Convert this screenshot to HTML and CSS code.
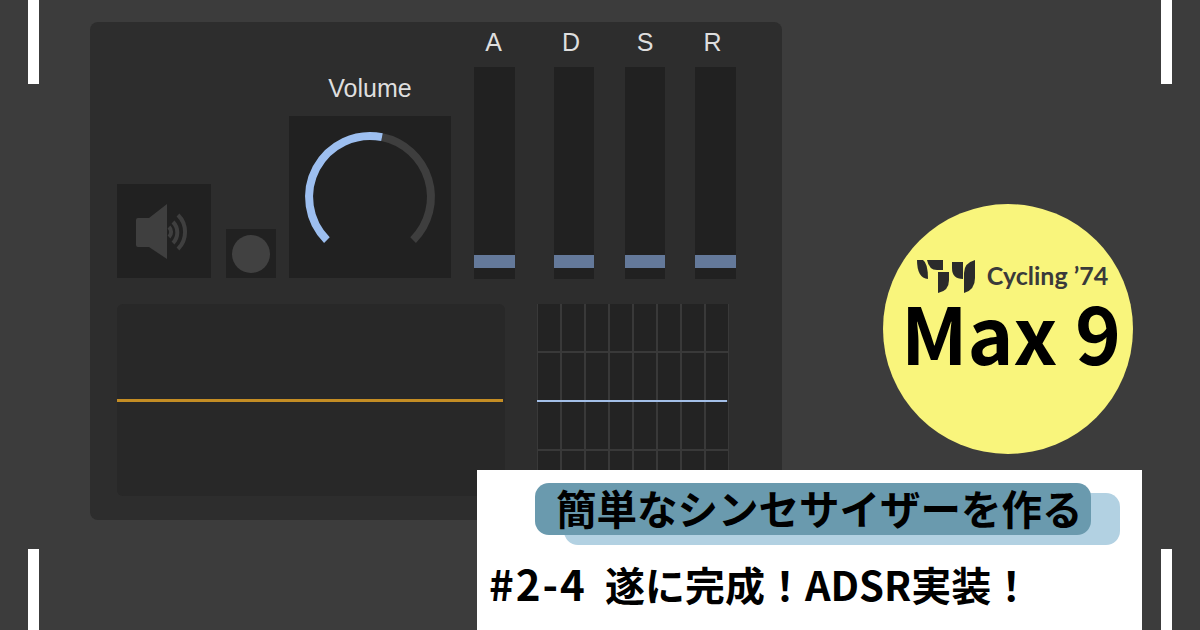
FILE: index.html
```html
<!DOCTYPE html>
<html lang="ja">

<head>
    <meta charset="UTF-8">
    <meta name="viewport" content="width=device-width, initial-scale=1.0">
    <title>Max 9 #2-4</title>
    <link rel="stylesheet" href="styles.css">
</head>

<body>
    <div class="thumb">
        <!-- Corner marks -->
        <span class="mark mark-tl"></span>
        <span class="mark mark-tr"></span>
        <span class="mark mark-bl"></span>
        <span class="mark mark-br"></span>

        <!-- Patch -->
        <div class="panel">
            <div class="top-row">
                <div class="box speaker">
                    <svg width="94" height="94" viewBox="0 0 94 94">
                        <path class="icon-fill" d="M19 36 Q19 34 21 34 H32 L50 20 V75 L32 63 H21 Q19 63 19 61 Z" />
                        <g class="icon-waves">
                            <path d="M52 43 A7 7 0 0 1 52 53" />
                            <path d="M56 38 A15 15 0 0 1 56 59" />
                            <path d="M61 31 A24 24 0 0 1 61 65" />
                        </g>
                    </svg>
                </div>
                <div class="box toggle"><span class="toggle-dot"></span></div>
                <div class="knob-col">
                    <div class="label">Volume</div>
                    <div class="box knob">
                        <svg width="162" height="162" viewBox="0 0 162 162">
                            <path class="arc arc-bg" d="M93 21.2 A61 61 0 0 1 124.1 124.1" />
                            <path class="arc arc-on" d="M37.9 124.1 A61 61 0 0 1 93 21.2" />
                        </svg>
                    </div>
                </div>
                <div class="sliders">
                    <div class="slider-col"><div class="label">A</div><div class="slider"><span class="slider-thumb"></span></div></div>
                    <div class="slider-col slider-d"><div class="label">D</div><div class="slider"><span class="slider-thumb"></span></div></div>
                    <div class="slider-col slider-s"><div class="label">S</div><div class="slider"><span class="slider-thumb"></span></div></div>
                    <div class="slider-col slider-r"><div class="label">R</div><div class="slider"><span class="slider-thumb"></span></div></div>
                </div>
            </div>
            <div class="bottom-row">
                <div class="scope"><span class="scope-line"></span></div>
                <div class="grid-scope"><span class="grid-line"></span></div>
            </div>
        </div>

        <!-- Yellow badge -->
        <div class="badge">
            <div class="brand">
                <svg width="58" height="33" viewBox="0 0 58 33">
                    <path class="logo" d="M0 0 H6 Q11 3 11 19 Q0 18 0 0 Z" />
                    <path class="logo" d="M10 0 H26 V10 H20 Q12 10 10 0 Z" />
                    <path class="logo" d="M21 12 H32 V20 Q32 31 21 33 Z" />
                    <path class="logo" d="M35 2 H46 V19 Q35 19 35 8 Z" />
                    <path class="logo" d="M58 0 Q47 3 47 13 V33 Q58 30 58 18 Z" />
                </svg>
                <span class="brand-name">Cycling ’74</span>
            </div>
            <div class="badge-title">Max 9</div>
        </div>

        <!-- Title card -->
        <div class="card">
            <h1 class="series">簡単なシンセサイザーを作る</h1>
            <p class="episode"><span class="episode-no">#2-4</span>遂に完成！ADSR実装！</p>
        </div>
    </div>
</body>

</html>
```

FILE: styles.css
```css
/* Global reset */
* {
    box-sizing: border-box;
    margin: 0;
    padding: 0;
}

body {
    width: 1200px;
    height: 630px;
    overflow: hidden;
    background-color: #3c3c3c;
    font-family: "Liberation Sans", Arial, sans-serif;
}

.thumb {
    position: relative;
    width: 1200px;
    height: 630px;
    padding: 22px 0 0 90px;
    overflow: hidden;
}

/* Corner marks */
.mark {
    position: absolute;
    width: 11px;
    background-color: #fff;
}

.mark-tl,
.mark-tr {
    top: 0;
    height: 84px;
}

.mark-bl,
.mark-br {
    bottom: 0;
    height: 81px;
}

.mark-tl,
.mark-bl {
    left: 28px;
}

.mark-tr,
.mark-br {
    left: 1161px;
}

/* Patch panel */
.panel {
    width: 692px;
    height: 498px;
    padding-left: 27px;
    background-color: #2d2d2d;
    border-radius: 8px;
}

.top-row {
    display: flex;
    align-items: flex-end;
    height: 256px;
}

.box {
    background-color: #212121;
}

.label {
    color: #dedede;
    font-size: 25px;
    line-height: 28px;
    text-align: center;
}

.speaker {
    width: 94px;
    height: 94px;
    margin-right: 15px;
}

.speaker svg,
.knob svg {
    display: block;
}

.icon-fill {
    fill: #3f3f3f;
}

.icon-waves path {
    fill: none;
    stroke: #3f3f3f;
    stroke-width: 4;
}

.toggle {
    display: flex;
    align-items: center;
    justify-content: center;
    width: 50px;
    height: 49px;
    margin-right: 13px;
}

.toggle-dot {
    width: 38px;
    height: 38px;
    border-radius: 50%;
    background-color: #414141;
}

.knob-col {
    width: 162px;
    margin-right: 23px;
}

.knob-col .label {
    margin-bottom: 14px;
}

.knob {
    width: 162px;
    height: 162px;
}

.arc {
    fill: none;
    stroke-width: 8;
}

.arc-bg {
    stroke: #3e3e3e;
}

.arc-on {
    stroke: #9dbff0;
}

/* ADSR sliders */
.sliders {
    display: flex;
    margin-bottom: -1px;
}

.slider-col {
    width: 41px;
}

.slider-col .label {
    margin-bottom: 11px;
    padding-right: 2px;
}

.slider-d {
    width: 40px;
    margin-left: 39px;
}

.slider-d .label,
.slider-r .label {
    padding-right: 6px;
}

.slider-s {
    width: 40px;
    margin-left: 31px;
}

.slider-s .label {
    padding-right: 0;
}

.slider-r {
    margin-left: 30px;
}

.slider {
    display: flex;
    flex-direction: column;
    justify-content: flex-end;
    height: 212px;
    padding-bottom: 11px;
    background-color: #212121;
}

.slider-thumb {
    height: 13px;
    background-color: #64799a;
}

/* Lower displays */
.bottom-row {
    display: flex;
    margin-top: 26px;
}

.scope {
    display: flex;
    align-items: center;
    width: 388px;
    height: 192px;
    margin-right: 32px;
    background-color: #282828;
    border-radius: 6px;
}

.scope-line {
    width: 386px;
    height: 3px;
    background-color: #c48d24;
}

.grid-scope {
    display: flex;
    align-items: center;
    width: 192px;
    height: 194px;
    background-color: #232323;
    background-image:
        linear-gradient(90deg, transparent 22px, #393939 22px, #393939 24px),
        linear-gradient(180deg, transparent 47px, #393939 47px, #393939 49px);
    background-size: 24px 100%, 100% 49px;
    background-position: 1px 0, 0 0;
}

.grid-line {
    width: 190px;
    height: 2px;
    background-color: #a3bfe8;
}

/* Yellow badge */
.badge {
    position: absolute;
    left: 883px;
    top: 204px;
    display: flex;
    flex-direction: column;
    align-items: center;
    width: 250px;
    height: 250px;
    padding-top: 56px;
    background-color: #f9f57c;
    border-radius: 50%;
}

.brand {
    display: flex;
    align-items: center;
    gap: 12px;
    height: 33px;
    margin-left: 9px;
}

.brand svg {
    flex: none;
}

.logo {
    fill: #2b2b2b;
}

.brand-name {
    position: relative;
    top: -2px;
    color: #3a3a3a;
    font-family: Lato, sans-serif;
    font-size: 25px;
    font-weight: 700;
    white-space: nowrap;
}

.badge-title {
    margin-top: -2px;
    margin-left: 6px;
    color: #000;
    font-family: "Noto Sans CJK JP", sans-serif;
    font-size: 78px;
    font-weight: 700;
    line-height: 80px;
    white-space: nowrap;
}

/* Title card */
.card {
    position: absolute;
    left: 477px;
    top: 470px;
    width: 665px;
    height: 160px;
    padding: 13px 0 0 58px;
    background-color: #fff;
    font-family: "Noto Sans CJK JP", sans-serif;
    color: #000;
}

.series {
    width: 556px;
    height: 52px;
    padding-left: 21px;
    background-color: #6a9aae;
    border-radius: 14px;
    box-shadow: 29px 10px 0 #b2d1e2;
    font-size: 40.5px;
    font-weight: 700;
    line-height: 50px;
    white-space: nowrap;
}

.episode {
    margin: 20px 0 0 -46px;
    font-size: 40px;
    font-weight: 700;
    line-height: 56px;
    white-space: nowrap;
}

.episode-no {
    margin-right: 18px;
    font-size: 42px;
    letter-spacing: 2px;
}
```
